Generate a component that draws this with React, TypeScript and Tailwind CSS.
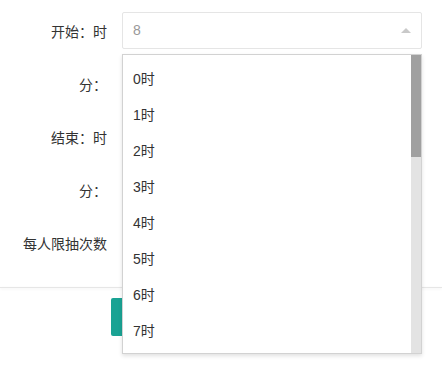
import { useState } from 'react';

const FONT = { fontFamily: '"Liberation Sans", "Noto Sans CJK SC", sans-serif' };

const HOURS = Array.from({ length: 24 }, (_, i) => `${i}时`);

const rows = ['开始：时', '分：', '结束：时', '分：', '每人限抽次数'];

function App() {
  const [hour] = useState('8');

  return (
    <div className="relative w-[442px] h-[392px] bg-white text-[14px] text-[#333]" style={FONT}>
      <div className="flex flex-col pt-[12px]">
        {rows.map((label, i) => (
          <div key={i} className="flex items-center h-[37px] mb-[16px]">
            <label className="w-[107px] text-right leading-none pt-[2px]">{label}</label>
            <div className="ml-[15px] w-[300px] h-[37px] border border-[#e5e5e5] rounded-[2px] flex items-center justify-between px-[10px]">
              {i === 0 && (
                <>
                  <span className="text-[#999]">{hour}</span>
                  <span className="w-0 h-0 border-l-[5px] border-r-[5px] border-b-[5px] border-l-transparent border-r-transparent border-b-[#c9c9c9]" />
                </>
              )}
            </div>
          </div>
        ))}
      </div>

      <div className="absolute left-0 right-0 top-[287px] h-[1px] bg-[#e6e6e6] shadow-[0_1px_3px_rgba(0,0,0,0.08)]" />

      {/* save button, mostly hidden under the open dropdown */}
      <div className="absolute left-[111px] top-[298px] flex gap-[10px]">
        <button aria-label="保存" className="h-[38px] w-[70px] rounded-[2px] bg-[#1aa394]" />
      </div>

      <div className="absolute left-[122px] top-[54px] w-[300px] h-[300px] bg-white border border-[#d2d2d2] shadow-[0_2px_4px_rgba(0,0,0,0.12)] flex">
        <ul className="flex-1 overflow-hidden pt-[6px]">
          {HOURS.slice(0, 8).map((h) => (
            <li key={h} className="h-[36px] flex items-center pl-[10px] text-[14px] text-[#333]">
              {h}
            </li>
          ))}
        </ul>
        <div className="w-[10px] bg-[#e3e3e3] flex flex-col">
          <div className="h-[102px] bg-[#a0a0a0]" />
        </div>
      </div>
    </div>
  );
}

export default App;
